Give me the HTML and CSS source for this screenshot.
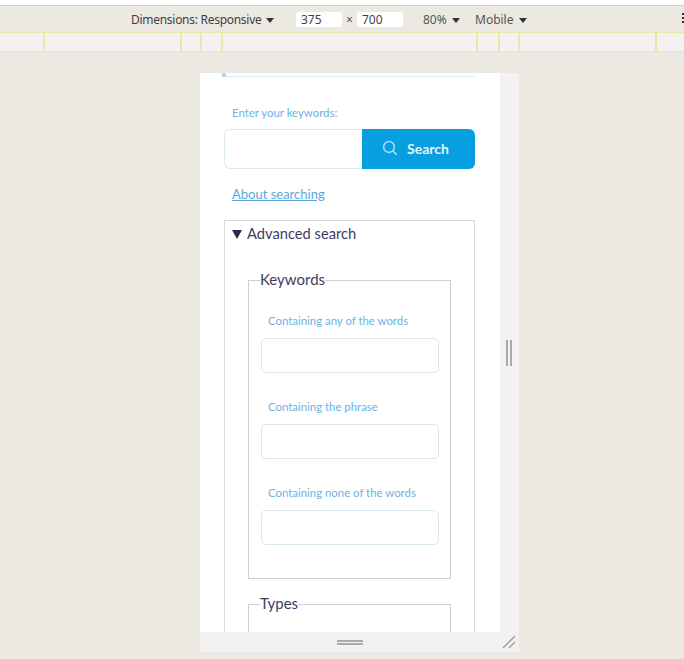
FILE: index.html
```html
<!DOCTYPE html>
<html lang="en">
<head>
<meta charset="utf-8">
<title>Advanced search</title>
<link rel="stylesheet" href="styles.css">
</head>
<body>
<header class="toolbar">
  <span class="tool dims">Dimensions: Responsive <i class="caret"></i></span>
  <span class="num w375">375</span>
  <span class="times">×</span>
  <span class="num w700">700</span>
  <span class="tool zoom">80% <i class="caret"></i></span>
  <span class="tool mobile">Mobile <i class="caret"></i></span>
  <span class="kebab"><b></b><b></b><b></b></span>
</header>
<div class="ruler">
  <span class="seg s1"></span><span class="seg s2"></span><span class="seg s3"></span><span class="seg s4"></span><span class="seg s5"></span><span class="seg s6"></span><span class="seg s7"></span><span class="seg s8"></span><span class="seg s9"></span>
</div>
<main class="stage">
  <div class="device">
    <div class="viewport">
      <div class="screen">
        <div class="stub"><span class="stub-mark"></span></div>
        <p class="field-label top-label">Enter your keywords:</p>
        <form class="search">
          <span class="search-input"></span>
          <span class="search-btn">
            <svg class="search-icon" viewBox="0 0 16 16" width="16" height="16"><circle cx="7" cy="7" r="5.4"/><path d="M11 11l3.6 3.6"/></svg>
            Search
          </span>
        </form>
        <a class="about" href="#">About searching</a>
        <div class="advanced">
          <div class="summary"><i class="tri"></i>Advanced search</div>
          <fieldset class="group keywords">
            <legend>Keywords</legend>
            <div class="row"><p class="field-label">Containing any of the words</p><span class="input"></span></div>
            <div class="row"><p class="field-label">Containing the phrase</p><span class="input"></span></div>
            <div class="row"><p class="field-label">Containing none of the words</p><span class="input"></span></div>
          </fieldset>
          <fieldset class="group types">
            <legend>Types</legend>
          </fieldset>
        </div>
      </div>
      <div class="side-handle"><b></b><b></b></div>
    </div>
    <div class="bottom-handle">
      <span class="grip"></span>
      <svg class="corner" viewBox="0 0 14 14" width="14" height="14"><path d="M1 13L13 1M7 13l6-6"/></svg>
    </div>
  </div>
</main>
</body>
</html>
```
FILE: styles.css
```css
* { box-sizing: border-box; }
html, body { margin: 0; height: 659px; overflow: hidden; }
body {
  background: #ebe9e1;
  border-top: 5px solid #fff;
  font-family: "Lato", "Noto Sans", sans-serif;
}
.toolbar {
  height: 27px;
  border-top: 1px solid #cfcfcb;
  display: flex;
  align-items: center;
  position: relative;
  font-family: "Noto Sans", sans-serif;
  font-size: 12px;
  color: #3f3f3f;
  padding-left: 131px;
}
.tool { white-space: nowrap; }
.caret {
  display: inline-block;
  width: 0; height: 0;
  border-left: 4px solid transparent;
  border-right: 4px solid transparent;
  border-top: 5px solid #333;
  margin-left: 2px;
  vertical-align: 1px;
}
.dims { width: 165px; letter-spacing: -0.28px; }
.num {
  background: #fff;
  border-radius: 3px;
  height: 15px;
  line-height: 15px;
  padding-left: 5px;
  width: 46px;
}
.times { width: 15px; text-align: center; color: #555; }
.zoom { margin-left: 20px; width: 52px; color: #555; }
.mobile { color: #555; }
.kebab {
  position: absolute; right: -1px; top: 7px;
  display: flex; flex-direction: column; gap: 2px;
}
.kebab b { width: 3px; height: 2px; background: #333; display: block; }
.ruler {
  height: 20px;
  background: #f4f2f1;
  border-top: 1px solid #ebe7a6;
  border-bottom: 1px solid #ebe7a6;
  display: grid;
  grid-template-columns: 45px 137px 20px 21px 255px 22px 20px 137px 1fr;
}
.seg { border-right: 2px solid #ebe7a6; }
.seg.s9 { border-right: 0; }
.stage { padding: 21px 0 0 200px; }
.device { width: 319px; height: 579px; }
.viewport { display: flex; height: 559px; }
.screen {
  width: 300px;
  background: #fff;
  overflow: hidden;
  padding: 0 24px;
}
.side-handle {
  width: 19px;
  background: #f4f1f2;
  display: flex;
  justify-content: center;
  align-items: center;
  gap: 2px;
  padding-right: 1px;
}
.side-handle b { width: 2px; height: 26px; background: #a9a9a9; display: block; }
.stub {
  height: 4px;
  margin: 0 0 0 -2px;
  width: 253px;
  border-bottom: 1px solid #d9e9f2;
  position: relative;
}
.stub-mark { position: absolute; left: 0; top: 0; width: 4px; height: 4px; background: #b5d6e6; }
.field-label {
  margin: 0;
  font-size: 11.4px;
  line-height: 14px;
  color: #6cb3e3;
}
.top-label { margin: 29px 0 0; padding-left: 8px; }
.search {
  display: flex;
  width: 251px;
  height: 40px;
  margin-top: 9px;
}
.search-input {
  width: 138px;
  border: 1px solid #dcebf3;
  border-right: 0;
  border-radius: 6px 0 0 6px;
}
.search-btn {
  flex: 1;
  background: #069fdf;
  border-radius: 0 6px 6px 0;
  color: #e6f5fc;
  font-size: 14px;
  font-weight: 700;
  display: flex;
  align-items: center;
  justify-content: center;
  gap: 9px;
  padding: 0 6px 2px 0;
}
.search-icon { fill: none; stroke: #b5e0f3; stroke-width: 1.5; }
.about {
  display: block;
  margin: 17px 0 0 8px;
  font-size: 13px;
  line-height: 17px;
  color: #5aa9dc;
  text-decoration: underline;
}
.advanced {
  margin-top: 17px;
  width: 251px;
  border: 1px solid #d9d9d9;
  padding: 0 24px 40px 23px;
}
.summary {
  height: 21px;
  margin-left: -16px;
  display: flex;
  align-items: flex-end;
  font-size: 14.7px;
  line-height: 18px;
  color: #413c62;
}
.tri {
  width: 0; height: 0;
  border-left: 5px solid transparent;
  border-right: 5px solid transparent;
  border-top: 9px solid #2b2850;
  margin: 0 5px 3px 0;
}
.group {
  margin: 0;
  min-width: 0;
  padding: 0 11px 0 12px;
  border: 1px solid #cfcfcf;
  width: 203px;
}
.group legend {
  padding: 0 0 2px;
  margin-left: -1px;
  font-size: 15px;
  line-height: 16px;
  color: #413c62;
}
.keywords { margin-top: 29px; height: 308px; }
.types { margin-top: 16px; height: 60px; }
.row { padding-top: 27px; }
.row:first-of-type { padding-top: 25px; }
.row .field-label { margin-bottom: 10px; padding-left: 7px; }
.input {
  display: block;
  width: 178px;
  height: 35px;
  border: 1px solid #d6e7ef;
  border-radius: 5px;
}
.bottom-handle {
  height: 20px;
  background: #f4f1f2;
  display: flex;
  align-items: center;
  justify-content: center;
  position: relative;
}
.grip {
  width: 26px;
  border-top: 2px solid #a9a9a9;
  border-bottom: 2px solid #a9a9a9;
  box-sizing: content-box;
  height: 1px;
  margin-right: 19px;
}
.corner {
  position: absolute; right: 3px; top: 3px;
  fill: none; stroke: #9a9a9a; stroke-width: 1.3;
}
```
